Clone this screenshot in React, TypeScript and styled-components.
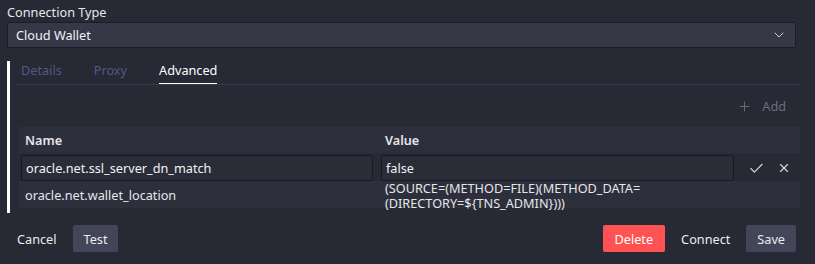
import React, { useState } from 'react';
import styled, { createGlobalStyle, css } from 'styled-components';
import { Check, ChevronDown, Plus, X } from 'lucide-react';

const GlobalStyle = createGlobalStyle`
  body {
    margin: 0;
    background-color: #272935;
    color: #e6e6ea;
    font-family: 'Noto Sans', 'Open Sans', sans-serif;
    font-size: 12.7px;
  }
  * { box-sizing: border-box; }
`;

const Page = styled.div`
  padding: 4px 15px 0 7px;
  height: 264px;
`;

const Label = styled.div`
  line-height: 17px;
  margin-bottom: 1px;
`;

const Select = styled.div`
  display: flex;
  align-items: center;
  justify-content: space-between;
  height: 26px;
  margin-right: 4px;
  padding: 0 8px 0 8px;
  background-color: #363848;
  border: 1px solid #1c1d25;
  border-radius: 2px;
  color: #f2f2f4;
`;

const Section = styled.div`
  margin-top: 13px;
  border-left: 3px solid #ffffff;
  padding-left: 6px;
  height: 152px;
`;

const TabBar = styled.div`
  display: flex;
  gap: 32px;
  height: 24px;
  padding-left: 5px;
  border-bottom: 1px solid #393b4a;
`;

const Tab = styled.div<{ active?: boolean }>`
  height: 23px;
  line-height: 19px;
  color: #4f5a85;
  cursor: pointer;
  ${(p) =>
    p.active &&
    css`
      color: #ffffff;
      border-bottom: 1px solid #ffffff;
    `};
`;

const Toolbar = styled.div`
  display: flex;
  justify-content: flex-end;
  padding: 0 14px 0 0;
  height: 42px;
  align-items: center;
`;

const AddButton = styled.div`
  display: flex;
  align-items: center;
  gap: 10px;
  color: #6c6f7c;
`;

const Table = styled.div`
  display: grid;
  grid-template-columns: 360px 357px 1fr;
  margin-left: 3px;
`;

const HeadCell = styled.div`
  height: 26px;
  line-height: 26px;
  padding: 0 6px;
  font-weight: 600;
  background-color: #2d2f3c;
`;

const Cell = styled.div<{ striped?: boolean; padRight?: number }>`
  display: flex;
  align-items: center;
  height: ${(p) => (p.striped ? 27 : 28)}px;
  padding: 2px ${(p) => p.padRight ?? 2}px 0 2px;
  background-color: ${(p) => (p.striped ? '#2d2f3c' : 'transparent')};
`;

const TextCell = styled(Cell)`
  padding-left: 6px;
  padding-top: 0;
`;

const MultiLine = styled.div`
  align-self: flex-start;
  line-height: 15px;
  white-space: pre;
`;

const Input = styled.input`
  width: 100%;
  height: 26px;
  padding: 0 4px;
  background-color: #2a2c38;
  border: 1px solid #191a21;
  border-radius: 2px;
  color: #f2f2f4;
  font-family: inherit;
  font-size: 12.7px;
  outline: none;
`;

const Actions = styled(Cell)`
  justify-content: flex-end;
  gap: 12px;
  padding-right: 9px;
  color: #d6d6dc;
`;

const Footer = styled.div`
  display: flex;
  align-items: center;
  margin-top: 12px;
  padding-right: 4px;
`;

const Spacer = styled.div`
  flex: 1;
`;

const Button = styled.button<{ variant?: 'ghost' | 'filled' | 'danger' }>`
  height: 27px;
  padding: 0 10px;
  margin-right: 6px;
  border: none;
  border-radius: 2px;
  font-family: inherit;
  font-size: 12.7px;
  color: #ececf0;
  background-color: transparent;
  cursor: pointer;
  ${(p) =>
    p.variant === 'filled' &&
    css`
      background-color: #434558;
      padding: 0 11px;
    `};
  ${(p) =>
    p.variant === 'danger' &&
    css`
      background-color: #ff5353;
      color: #ffffff;
      padding: 0 12px;
    `};
  &:last-child {
    margin-right: 0;
  }
`;

const App: React.FC = () => {
  const [name, setName] = useState('oracle.net.ssl_server_dn_match');
  const [value, setValue] = useState('false');
  return (
    <Page>
      <GlobalStyle />
      <Label>Connection Type</Label>
      <Select>
        <span>Cloud Wallet</span>
        <ChevronDown size={16} strokeWidth={1.5} color="#cfd0d6" />
      </Select>
      <Section>
        <TabBar>
          <Tab>Details</Tab>
          <Tab>Proxy</Tab>
          <Tab active>Advanced</Tab>
        </TabBar>
        <Toolbar>
          <AddButton>
            <Plus size={15} strokeWidth={1.5} />
            <span>Add</span>
          </AddButton>
        </Toolbar>
        <Table>
          <HeadCell>Name</HeadCell>
          <HeadCell>Value</HeadCell>
          <HeadCell />
          <Cell padRight={6}>
            <Input value={name} onChange={(e) => setName(e.target.value)} />
          </Cell>
          <Cell>
            <Input value={value} onChange={(e) => setValue(e.target.value)} />
          </Cell>
          <Actions>
            <Check size={17} strokeWidth={1.6} />
            <X size={14} strokeWidth={2} />
          </Actions>
          <TextCell striped>oracle.net.wallet_location</TextCell>
          <TextCell striped>
            <MultiLine>{'(SOURCE=(METHOD=FILE)(METHOD_DATA=\n(DIRECTORY=${TNS_ADMIN})))'}</MultiLine>
          </TextCell>
          <Cell striped />
        </Table>
      </Section>
      <Footer>
        <Button variant="ghost">Cancel</Button>
        <Button variant="filled">Test</Button>
        <Spacer />
        <Button variant="danger">Delete</Button>
        <Button variant="ghost">Connect</Button>
        <Button variant="filled">Save</Button>
      </Footer>
    </Page>
  );
};

export default App;
